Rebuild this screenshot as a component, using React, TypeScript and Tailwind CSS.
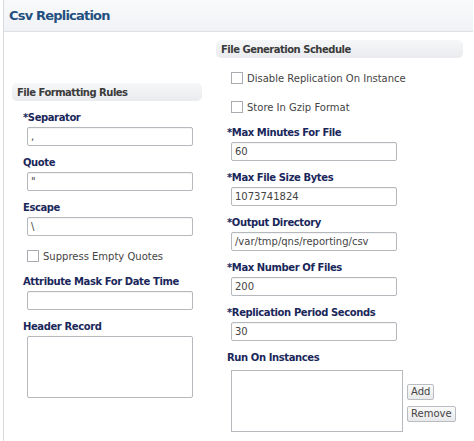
import React from 'react';

const font = { fontFamily: '"DejaVu Sans", Verdana, sans-serif' };

function Label({ text }: { text: string }) {
  return (
    <p className="h-[14px] pt-[1px] text-[10px] font-bold leading-[14px] tracking-[-0.4px] text-[#1a275a]">{text}</p>
  );
}

function Field({ value }: { value: string }) {
  return (
    <div className="ml-[4px] mt-[3px] flex h-[19px] w-[166px] items-center rounded-[2px] border border-[#b5b8bd] bg-white px-[3px] text-[10px] text-[#444] shadow-[inset_0_1px_1px_rgba(0,0,0,0.05)]">
      {value}
    </div>
  );
}

function Check({ text }: { text: string }) {
  return (
    <div className="flex h-[12px] items-center gap-[4px] text-[10px] text-[#444]">
      <span className="h-[12px] w-[12px] shrink-0 border border-[#a8abb0] bg-white" />
      {text}
    </div>
  );
}

function SectionHead({ text }: { text: string }) {
  return (
    <div className="flex h-[18px] items-center rounded-[5px] bg-gradient-to-b from-[#f6f7f8] to-[#e9ebee] pl-[5px] text-[10px] font-bold tracking-[-0.5px] text-[#3a3a3a]">
      {text}
    </div>
  );
}

function Button({ text }: { text: string }) {
  return (
    <button className="h-[16px] rounded-[2px] border border-[#b9bcc1] bg-gradient-to-b from-[#fafafa] to-[#e8e9eb] px-[3px] text-[10px] leading-[14px] text-[#444]">
      {text}
    </button>
  );
}

export default function App() {
  return (
    <div className="h-[441px] w-[474px] overflow-hidden bg-white" style={font}>
      <div className="ml-[3px] h-full w-[470px] border-l border-[#d8dbe0]">
        {/* title */}
        <div className="flex h-[32px] items-center border-b border-[#dde1e6] bg-gradient-to-b from-[#f9fafb] to-[#f0f2f6] pl-[5px] text-[13px] font-bold tracking-[-0.8px] text-[#24507f]">
          Csv Replication
        </div>

        <div className="flex">
          {/* LEFT */}
          <div className="ml-[8px] mt-[51px] w-[190px]">
            <SectionHead text="File Formatting Rules" />
            <div className="ml-[11px] mt-[9px]">
              <Label text="*Separator" />
              <Field value="," />
              <div className="mt-[9px]"><Label text="Quote" /></div>
              <Field value={'"'} />
              <div className="mt-[9px]"><Label text="Escape" /></div>
              <Field value="\" />
              <div className="ml-[4px] mt-[14px]"><Check text="Suppress Empty Quotes" /></div>
              <div className="mt-[12px]"><Label text="Attribute Mask For Date Time" /></div>
              <Field value="" />
              <div className="mt-[9px]"><Label text="Header Record" /></div>
              <div className="ml-[4px] mt-[3px] h-[62px] w-[166px] rounded-[2px] border border-[#b5b8bd] bg-white" />
            </div>
          </div>

          {/* RIGHT */}
          <div className="ml-[14px] mt-[8px] w-[247px]">
            <SectionHead text="File Generation Schedule" />
            <div className="ml-[11px] mt-[14px]">
              <div className="ml-[4px]"><Check text="Disable Replication On Instance" /></div>
              <div className="ml-[4px] mt-[17px]"><Check text="Store In Gzip Format" /></div>
              <div className="mt-[12px]"><Label text="*Max Minutes For File" /></div>
              <Field value="60" />
              <div className="mt-[9px]"><Label text="*Max File Size Bytes" /></div>
              <Field value="1073741824" />
              <div className="mt-[9px]"><Label text="*Output Directory" /></div>
              <Field value="/var/tmp/qns/reporting/csv" />
              <div className="mt-[9px]"><Label text="*Max Number Of Files" /></div>
              <Field value="200" />
              <div className="mt-[9px]"><Label text="*Replication Period Seconds" /></div>
              <Field value="30" />
              <div className="mt-[9px]"><Label text="Run On Instances" /></div>
              <div className="ml-[4px] mt-[6px] flex items-start gap-[4px]">
                <div className="h-[62px] w-[172px] border border-[#b5b8bd] bg-white" />
                <div className="mt-[14px] flex flex-col items-start gap-[6px]">
                  <Button text="Add" />
                  <Button text="Remove" />
                </div>
              </div>
            </div>
          </div>
        </div>
      </div>
    </div>
  );
}
